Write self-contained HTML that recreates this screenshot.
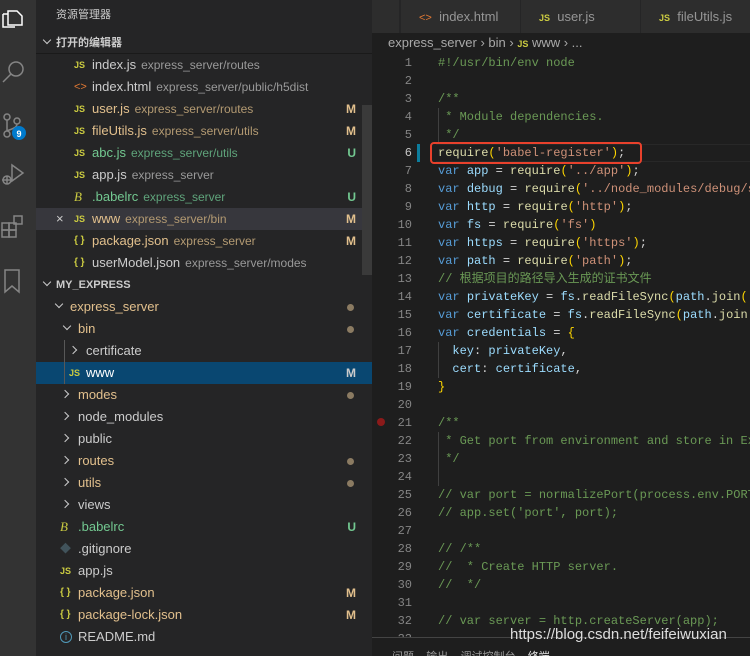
<!DOCTYPE html>
<html><head><meta charset="utf-8"><style>
*{margin:0;padding:0;box-sizing:border-box}
html,body{width:750px;height:656px;overflow:hidden}
body{background:#1e1e1e;font-family:"Liberation Sans","Noto Sans CJK SC",sans-serif;position:relative}
#act{position:absolute;left:0;top:0;width:36px;height:656px;background:#333}
#side{position:absolute;left:36px;top:0;width:336px;height:656px;background:#252526;font-size:13px}
.r{position:absolute;left:0;width:336px;height:22px;line-height:22px;color:#ccc;white-space:nowrap}
.r .d{color:#999;font-size:12px;margin-left:5px}
.m{position:absolute;right:16px;top:0;color:#e2c08d;font-size:12px;font-weight:bold}
.u{position:absolute;right:16px;top:0;color:#73c991;font-size:12px;font-weight:bold}
.dot{position:absolute;right:18px;top:8px;width:7px;height:7px;border-radius:50%;background:#8b7b62}
.js{position:absolute;color:#cbcb41;font-size:9px;font-weight:bold;top:0}
.br{position:absolute;color:#cbcb41;font-size:10px;font-weight:bold}
.ch{position:absolute;top:7px;width:6px;height:6px;border-right:1px solid #ccc;border-bottom:1px solid #ccc}
.chr{transform:rotate(-45deg)}
.chd{transform:rotate(45deg);top:5px}
.y{color:#e2c08d}.y .d{color:#b39a72}
.g{color:#73c991}.g .d{color:#5fa47b}
#ed{position:absolute;left:372px;top:0;width:378px;height:656px;background:#1e1e1e;overflow:hidden}
#tabs{position:absolute;left:0;top:0;width:378px;height:33px;background:#252526}
.tab{position:absolute;top:0;height:33px;line-height:33px;background:#2d2d2d;color:#969696;font-size:13px;border-right:1px solid #252526;padding-left:18px}
#code{position:absolute;left:0;top:54px;font-family:"Liberation Mono",monospace;font-size:12px}
.l{position:absolute;height:18px;line-height:18px;white-space:pre;left:66px;color:#d4d4d4}
.n{position:absolute;height:18px;line-height:18px;width:40px;text-align:right;left:0;color:#858585}
.c{color:#6a9955}.k{color:#569cd6}.v{color:#9cdcfe}.f{color:#dcdcaa}.s{color:#ce9178}.b{color:#ffd700}
.ig{position:absolute;width:1px;background:#404040}
</style></head><body>
<div id="act">
<svg width="36" height="300" viewBox="0 0 36 300" fill="none" stroke-width="1.5">
<g stroke="#fff"><path d="M8 11h9l5 5v9h-14z"/><path d="M3 14v13h12"/><path d="M3 14h5"/></g>
<g stroke="#858585"><circle cx="16" cy="69" r="7"/><path d="M11 74l-8 8"/>
<circle cx="7" cy="117" r="3"/><circle cx="7" cy="134" r="3"/><circle cx="17" cy="121" r="3"/><path d="M7 120v11M17 124c0 4-6 5-10 7"/>
<path d="M12 165v16l11-8z"/><circle cx="7" cy="180" r="4"/><path d="M2 180h10M7 176v8"/>
<rect x="2" y="223" width="7" height="7"/><rect x="9" y="223" width="7" height="7"/><rect x="2" y="230" width="7" height="7"/><rect x="14" y="216" width="8" height="8"/><rect x="9" y="230" width="7" height="7"/>
<path d="M5 270h14v22l-7-6-7 6z"/></g>
<circle cx="19" cy="133" r="7" fill="#007acc"/><text x="19" y="137" fill="#fff" font-size="9" text-anchor="middle" font-family="Liberation Sans" font-weight="bold">9</text>
</svg>
</div>
<div id="side">
<div class="r" style="top:4px;left:20px;font-size:11px">资源管理器</div>
<div class="r" style="top:32px;font-size:11px;font-weight:bold"><span class="ch chd" style="left:8px"></span><span style="margin-left:20px">打开的编辑器</span></div>
<div style="position:absolute;left:0;top:53px;width:336px;height:1px;background:#1a1a1a"></div>
<div style="position:absolute;left:326px;top:105px;width:10px;height:170px;background:#3a3a3a"></div>
<div style="position:absolute;left:0;top:208px;width:326px;height:22px;background:#37373d"></div>
<div class="r" style="top:54px"><span class="js" style="left:38px">JS</span><span style="margin-left:56px">index.js</span><span class="d">express_server/routes</span></div>
<div class="r" style="top:76px"><span style="position:absolute;left:38px;color:#e37933;font-size:11px">&lt;&gt;</span><span style="margin-left:56px">index.html</span><span class="d">express_server/public/h5dist</span></div>
<div class="r y" style="top:98px"><span class="js" style="left:38px">JS</span><span style="margin-left:56px">user.js</span><span class="d">express_server/routes</span><span class="m">M</span></div>
<div class="r y" style="top:120px"><span class="js" style="left:38px">JS</span><span style="margin-left:56px">fileUtils.js</span><span class="d">express_server/utils</span><span class="m">M</span></div>
<div class="r g" style="top:142px"><span class="js" style="left:38px">JS</span><span style="margin-left:56px">abc.js</span><span class="d">express_server/utils</span><span class="u">U</span></div>
<div class="r" style="top:164px"><span class="js" style="left:38px">JS</span><span style="margin-left:56px">app.js</span><span class="d">express_server</span></div>
<div class="r g" style="top:186px"><span style="position:absolute;left:38px;color:#cbcb41;font-style:italic;font-family:'Liberation Serif'">B</span><span style="margin-left:56px">.babelrc</span><span class="d">express_server</span><span class="u">U</span></div>
<div class="r y" style="top:208px"><span style="position:absolute;left:20px;color:#ccc">×</span><span class="js" style="left:38px">JS</span><span style="margin-left:56px">www</span><span class="d">express_server/bin</span><span class="m">M</span></div>
<div class="r y" style="top:230px"><span class="br" style="left:38px">{ }</span><span style="margin-left:56px">package.json</span><span class="d">express_server</span><span class="m">M</span></div>
<div class="r" style="top:252px"><span class="br" style="left:38px">{ }</span><span style="margin-left:56px">userModel.json</span><span class="d">express_server/modes</span></div>
<div class="r" style="top:274px;font-size:11px;font-weight:bold"><span class="ch chd" style="left:8px"></span><span style="margin-left:20px">MY_EXPRESS</span></div>
<div class="r y" style="top:296px"><span class="ch chd" style="left:20px"></span><span style="margin-left:34px">express_server</span><span class="dot"></span></div>
<div class="r y" style="top:318px"><span class="ch chd" style="left:28px"></span><span style="margin-left:42px">bin</span><span class="dot"></span></div>
<div style="position:absolute;left:0;top:362px;width:336px;height:22px;background:#094771"></div>
<div style="position:absolute;left:28px;top:340px;width:1px;height:44px;background:#585858"></div>
<div class="r" style="top:340px"><span class="ch chr" style="left:34px"></span><span style="margin-left:50px">certificate</span></div>
<div class="r" style="top:362px;color:#fff"><span class="js" style="left:33px">JS</span><span style="margin-left:50px">www</span><span class="m" style="color:#ccc">M</span></div>
<div class="r y" style="top:384px"><span class="ch chr" style="left:26px"></span><span style="margin-left:42px">modes</span><span class="dot"></span></div>
<div class="r" style="top:406px"><span class="ch chr" style="left:26px"></span><span style="margin-left:42px">node_modules</span></div>
<div class="r" style="top:428px"><span class="ch chr" style="left:26px"></span><span style="margin-left:42px">public</span></div>
<div class="r y" style="top:450px"><span class="ch chr" style="left:26px"></span><span style="margin-left:42px">routes</span><span class="dot"></span></div>
<div class="r y" style="top:472px"><span class="ch chr" style="left:26px"></span><span style="margin-left:42px">utils</span><span class="dot"></span></div>
<div class="r" style="top:494px"><span class="ch chr" style="left:26px"></span><span style="margin-left:42px">views</span></div>
<div class="r g" style="top:516px"><span style="position:absolute;left:24px;color:#cbcb41;font-style:italic;font-family:'Liberation Serif'">B</span><span style="margin-left:42px">.babelrc</span><span class="u">U</span></div>
<div class="r" style="top:538px"><span style="position:absolute;left:24px;color:#41535b;font-size:11px">◆</span><span style="margin-left:42px">.gitignore</span></div>
<div class="r" style="top:560px"><span class="js" style="left:24px">JS</span><span style="margin-left:42px">app.js</span></div>
<div class="r y" style="top:582px"><span class="br" style="left:24px">{ }</span><span style="margin-left:42px">package.json</span><span class="m">M</span></div>
<div class="r y" style="top:604px"><span class="br" style="left:24px">{ }</span><span style="margin-left:42px">package-lock.json</span><span class="m">M</span></div>
<div class="r" style="top:626px"><span style="position:absolute;left:24px;top:5px;width:12px;height:12px;border:1px solid #519aba;border-radius:50%;color:#519aba;font-size:9px;line-height:10px;text-align:center">i</span><span style="margin-left:42px">README.md</span></div>
</div>
<div id="ed">
<div id="tabs">
<div class="tab" style="left:0;width:28px;padding:0"></div>
<div class="tab" style="left:29px;width:120px"><span style="color:#e37933;font-size:11px">&lt;&gt;</span>&nbsp; index.html</div>
<div class="tab" style="left:149px;width:120px"><span style="color:#cbcb41;font-size:9px;font-weight:bold">JS</span>&nbsp; user.js</div>
<div class="tab" style="left:269px;width:120px"><span style="color:#cbcb41;font-size:9px;font-weight:bold">JS</span>&nbsp; fileUtils.js</div>
</div>
<div style="position:absolute;left:16px;top:35px;font-size:13px;color:#a9a9a9">express_server › bin › <span style="color:#cbcb41;font-size:9px;font-weight:bold">JS</span> www › ...</div>
<div style="position:absolute;left:64px;top:144px;width:314px;height:18px;border-top:1px solid #282828;border-bottom:1px solid #282828"></div>
<div style="position:absolute;left:45px;top:144px;width:3px;height:18px;background:#0c7d9d"></div>
<div style="position:absolute;left:5px;top:418px;width:8px;height:8px;border-radius:50%;background:#8b1a1a"></div>
<div class="ig" style="left:66px;top:108px;height:36px"></div>
<div class="ig" style="left:66px;top:342px;height:36px"></div>
<div class="ig" style="left:66px;top:432px;height:54px"></div>
<div style="position:absolute;left:58px;top:142px;width:212px;height:22px;border:2px solid #e8412c;border-radius:4px"></div>
<div id="code">
<div class="n" style="top:0">1</div><div class="l c" style="top:0">#!/usr/bin/env node</div>
<div class="n" style="top:18px">2</div>
<div class="n" style="top:36px">3</div><div class="l c" style="top:36px">/**</div>
<div class="n" style="top:54px">4</div><div class="l c" style="top:54px"> * Module dependencies.</div>
<div class="n" style="top:72px">5</div><div class="l c" style="top:72px"> */</div>
<div class="n" style="top:90px;color:#c6c6c6">6</div><div class="l" style="top:90px"><span class="f">require</span><span class="b">(</span><span class="s">'babel-register'</span><span class="b">)</span>;</div>
<div class="n" style="top:108px">7</div><div class="l" style="top:108px"><span class="k">var</span> <span class="v">app</span> = <span class="f">require</span><span class="b">(</span><span class="s">'../app'</span><span class="b">)</span>;</div>
<div class="n" style="top:126px">8</div><div class="l" style="top:126px"><span class="k">var</span> <span class="v">debug</span> = <span class="f">require</span><span class="b">(</span><span class="s">'../node_modules/debug/s</span></div>
<div class="n" style="top:144px">9</div><div class="l" style="top:144px"><span class="k">var</span> <span class="v">http</span> = <span class="f">require</span><span class="b">(</span><span class="s">'http'</span><span class="b">)</span>;</div>
<div class="n" style="top:162px">10</div><div class="l" style="top:162px"><span class="k">var</span> <span class="v">fs</span> = <span class="f">require</span><span class="b">(</span><span class="s">'fs'</span><span class="b">)</span></div>
<div class="n" style="top:180px">11</div><div class="l" style="top:180px"><span class="k">var</span> <span class="v">https</span> = <span class="f">require</span><span class="b">(</span><span class="s">'https'</span><span class="b">)</span>;</div>
<div class="n" style="top:198px">12</div><div class="l" style="top:198px"><span class="k">var</span> <span class="v">path</span> = <span class="f">require</span><span class="b">(</span><span class="s">'path'</span><span class="b">)</span>;</div>
<div class="n" style="top:216px">13</div><div class="l c" style="top:216px;font-family:'Liberation Mono','Noto Sans CJK SC',monospace">// 根据项目的路径导入生成的证书文件</div>
<div class="n" style="top:234px">14</div><div class="l" style="top:234px"><span class="k">var</span> <span class="v">privateKey</span> = <span class="v">fs</span>.<span class="f">readFileSync</span><span class="b">(</span><span class="v">path</span>.<span class="f">join</span><span class="b">(</span></div>
<div class="n" style="top:252px">15</div><div class="l" style="top:252px"><span class="k">var</span> <span class="v">certificate</span> = <span class="v">fs</span>.<span class="f">readFileSync</span><span class="b">(</span><span class="v">path</span>.<span class="f">join</span></div>
<div class="n" style="top:270px">16</div><div class="l" style="top:270px"><span class="k">var</span> <span class="v">credentials</span> = <span class="b">{</span></div>
<div class="n" style="top:288px">17</div><div class="l" style="top:288px">  <span class="v">key</span>: <span class="v">privateKey</span>,</div>
<div class="n" style="top:306px">18</div><div class="l" style="top:306px">  <span class="v">cert</span>: <span class="v">certificate</span>,</div>
<div class="n" style="top:324px">19</div><div class="l" style="top:324px"><span class="b">}</span></div>
<div class="n" style="top:342px">20</div>
<div class="n" style="top:360px">21</div><div class="l c" style="top:360px">/**</div>
<div class="n" style="top:378px">22</div><div class="l c" style="top:378px"> * Get port from environment and store in Ex</div>
<div class="n" style="top:396px">23</div><div class="l c" style="top:396px"> */</div>
<div class="n" style="top:414px">24</div>
<div class="n" style="top:432px">25</div><div class="l c" style="top:432px">// var port = normalizePort(process.env.PORT</div>
<div class="n" style="top:450px">26</div><div class="l c" style="top:450px">// app.set('port', port);</div>
<div class="n" style="top:468px">27</div>
<div class="n" style="top:486px">28</div><div class="l c" style="top:486px">// /**</div>
<div class="n" style="top:504px">29</div><div class="l c" style="top:504px">//  * Create HTTP server.</div>
<div class="n" style="top:522px">30</div><div class="l c" style="top:522px">//  */</div>
<div class="n" style="top:540px">31</div>
<div class="n" style="top:558px">32</div><div class="l c" style="top:558px">// var server = http.createServer(app);</div>
<div class="n" style="top:576px">33</div>
</div>
<div style="position:absolute;left:0;top:637px;width:378px;height:19px;background:#1e1e1e;border-top:1px solid #444"></div>
<div style="position:absolute;left:20px;top:648px;font-size:11px;color:#999;white-space:nowrap">问题 &nbsp; &nbsp;输出 &nbsp; &nbsp;调试控制台 &nbsp; &nbsp;<span style="color:#e7e7e7">终端</span></div>
<div style="position:absolute;left:138px;top:626px;font-size:15px;color:#ddd;white-space:nowrap">https://blog.csdn.net/feifeiwuxian</div>
</div>
</body></html>
